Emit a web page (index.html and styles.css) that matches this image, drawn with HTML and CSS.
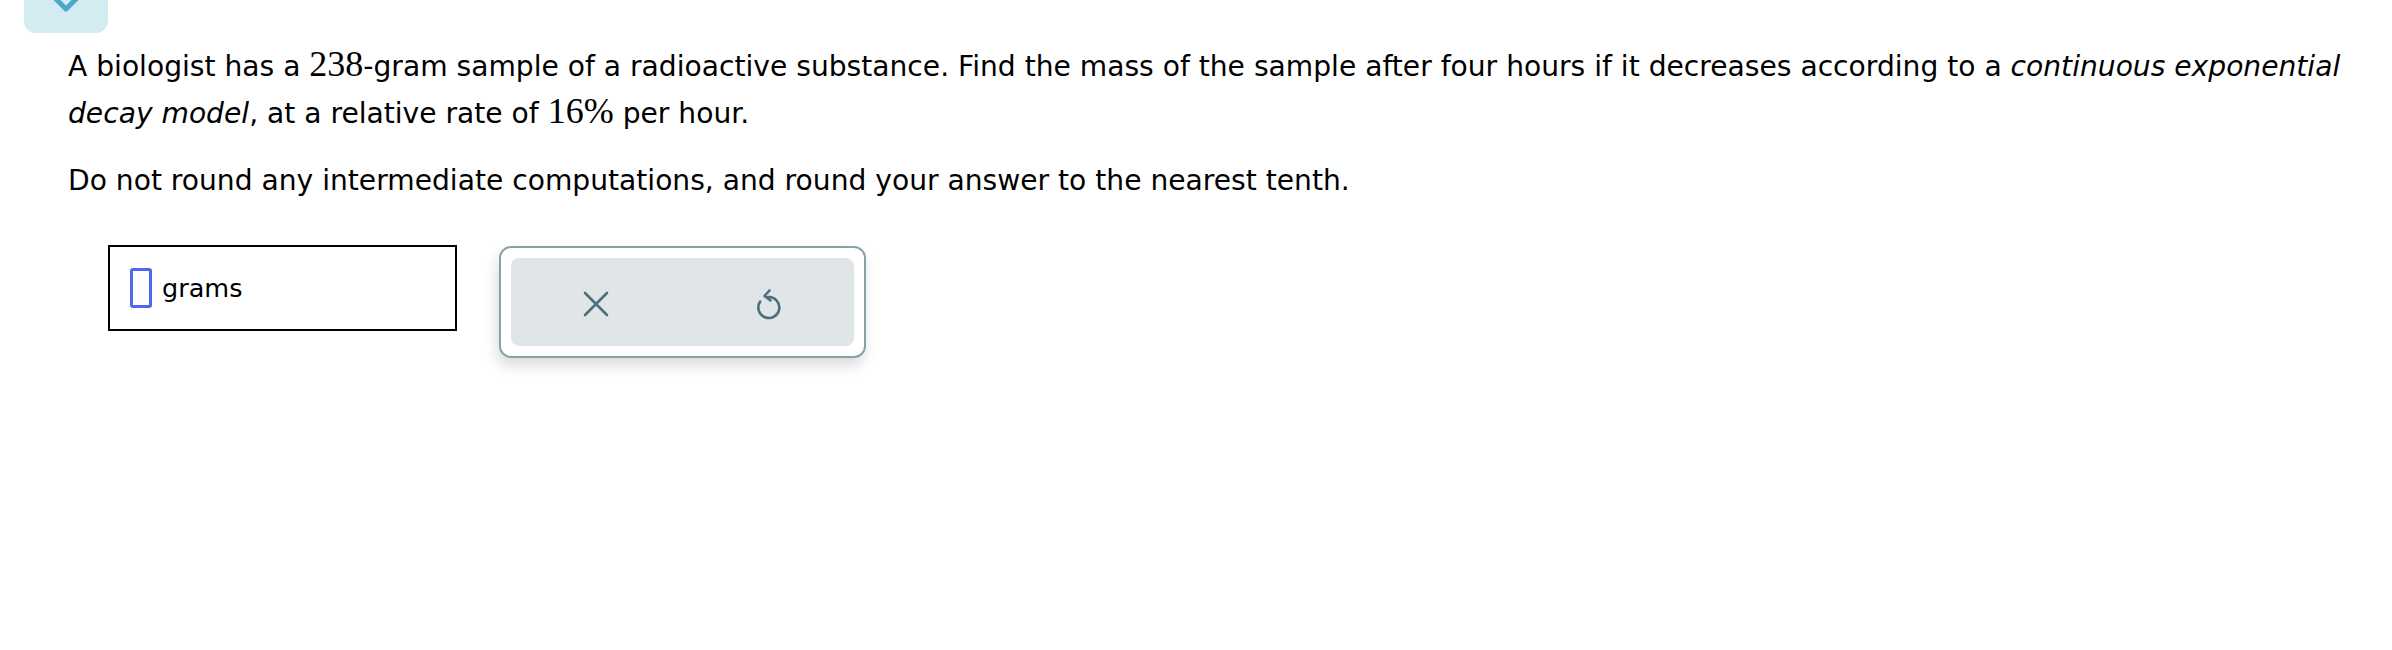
FILE: index.html
```html
<!DOCTYPE html>
<html>
<head>
<meta charset="utf-8">
<link rel="stylesheet" href="styles.css">
</head>
<body>
<div class="page">
  <div class="top-row">
    <button class="collapse-btn" aria-label="collapse">
      <svg width="30" height="20" viewBox="0 0 30 20"><path d="M4 -2 L15 9 L26 -2" fill="none" stroke="#4aa9c7" stroke-width="5" stroke-linecap="round" stroke-linejoin="round"/></svg>
    </button>
  </div>
  <div class="question">
    <p class="para">A biologist has a <span class="math">238</span>-gram sample of a radioactive substance. Find the mass of the sample after four hours if it decreases according to a <em>continuous exponential</em> <em>decay model</em>, at a relative rate of <span class="math">16%</span> per hour.</p>
    <p class="para">Do not round any intermediate computations, and round your answer to the nearest tenth.</p>
  </div>
  <div class="answer-row">
    <div class="answer-box">
      <span class="cursor-box"></span>
      <span class="unit">grams</span>
    </div>
    <div class="tools">
      <div class="tools-inner">
        <button class="tool" aria-label="clear">
          <svg width="26" height="26" viewBox="0 0 26 26"><path d="M2 2 L24 24 M24 2 L2 24" stroke="#4f6d7a" stroke-width="2.6" stroke-linecap="round" fill="none"/></svg>
        </button>
        <button class="tool" aria-label="undo">
          <svg width="28" height="36" viewBox="0 0 28 36"><path d="M6.2 15.5 A10.5 10.5 0 1 0 14 11" stroke="#4f6d7a" stroke-width="2.6" stroke-linecap="round" fill="none"/><path d="M15.5 4.5 L10.5 10 L16.5 14.5" stroke="#4f6d7a" stroke-width="2.6" stroke-linecap="round" stroke-linejoin="round" fill="none"/></svg>
        </button>
      </div>
    </div>
  </div>
</div>
</body>
</html>
```
FILE: styles.css
```css
* { box-sizing: border-box; }
html, body { margin: 0; padding: 0; background: #fff; }
body { font-family: "DejaVu Sans", Verdana, sans-serif; color: #000; }
.page { width: 2392px; height: 650px; position: relative; }
.top-row { display: flex; padding-left: 24px; height: 33px; }
.collapse-btn {
  width: 84px; height: 33px; border: none; padding: 0;
  background: #d3ecf2; border-radius: 0 0 12px 12px;
  display: flex; justify-content: center; align-items: flex-start;
}
.collapse-btn svg { display: block; }
.question { padding: 10px 40px 0 68px; }
.para { margin: 0 0 20px 0; font-size: 28.15px; line-height: 47px; }
.para em { font-style: italic; }
.math { font-family: "Liberation Serif", "Times New Roman", serif; font-size: 36px; line-height: 1; }
.answer-row { display: flex; align-items: flex-start; padding-left: 108px; margin-top: 41px; gap: 42px; }
.answer-box {
  width: 349px; height: 86px; border: 2px solid #000;
  display: flex; align-items: center; padding-left: 20px; gap: 10px;
}
.cursor-box { width: 22px; height: 40px; border: 3px solid #4a68f0; border-radius: 3px; }
.unit { font-size: 25.5px; }
.tools {
  width: 367px; height: 112px; border: 2px solid #8aa0a8; border-radius: 12px;
  padding: 10px; background: #fff; margin-top: 1px;
  box-shadow: -2px 8px 14px rgba(0,0,0,0.14);
}
.tools-inner {
  height: 100%; background: #e0e5e8; border-radius: 8px;
  display: flex; justify-content: space-around; align-items: center;
  padding-top: 4px;
}
.tool { background: none; border: none; padding: 0; display: flex; }
```
